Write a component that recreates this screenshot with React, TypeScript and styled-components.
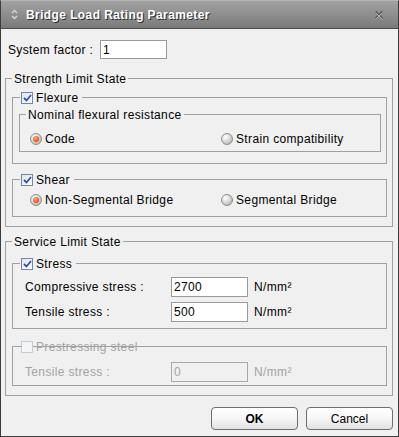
import React from "react";
import styled, { createGlobalStyle } from "styled-components";

const Global = createGlobalStyle`
  html, body {
    margin: 0;
    padding: 0;
    background: #f0f0f0;
  }
  body {
    font-family: "Liberation Sans", Arial, sans-serif;
    font-size: 12px;
    letter-spacing: 0.35px;
    color: #000;
  }
`;

const Window = styled.div`
  width: 399px;
  height: 437px;
  box-sizing: border-box;
  border: 1px solid #3c3c3c;
  border-top: none;
  background: #f0f0f0;
  display: flex;
  flex-direction: column;
`;

const TitleBar = styled.div`
  height: 29px;
  box-sizing: border-box;
  margin: 0 -1px;
  border-top: 1px solid #b4b4b4;
  border-bottom: 1px solid #4c4c4c;
  border-left: 1px solid #3c3c3c;
  border-right: 1px solid #3c3c3c;
  background: linear-gradient(#a2a2a2, #8e8e8e 50%, #7a7a7a);
  display: flex;
  align-items: center;
  padding: 0 14px 0 10px;
`;

const TitleText = styled.span`
  flex: 1;
  margin-left: 8px;
  font-weight: 700;
  font-size: 12px;
  letter-spacing: 0.4px;
  color: #fff;
  text-shadow: 1px 1px 0 #2e2e2e;
`;

const Body = styled.div`
  flex: 1;
  display: flex;
  flex-direction: column;
  padding: 11px 5px 0 4px;
`;

const FieldRow = styled.div`
  height: 19px;
  display: flex;
  align-items: center;
  padding-left: 3px;
  margin-bottom: 19px;
`;

const Label = styled.span<{ $w?: number; $off?: boolean }>`
  width: ${(p) => (p.$w ? `${p.$w}px` : "auto")};
  flex: none;
  color: ${(p) => (p.$off ? "#a3a3a3" : "#000")};
  white-space: nowrap;
`;

const Input = styled.div<{ $w: number; $h: number; $off?: boolean }>`
  width: ${(p) => p.$w}px;
  height: ${(p) => p.$h}px;
  box-sizing: border-box;
  border: 1px solid ${(p) => (p.$off ? "#a8a8a8" : "#9a9a9a")};
  background: ${(p) => (p.$off ? "#f0f0f0" : "#fff")};
  color: ${(p) => (p.$off ? "#a3a3a3" : "#000")};
  display: flex;
  align-items: center;
  padding-left: 2px;
  flex: none;
`;

const Unit = styled.span<{ $off?: boolean }>`
  margin-left: 6px;
  color: ${(p) => (p.$off ? "#a3a3a3" : "#000")};
`;

const Group = styled.div<{ $pad: string; $mt?: number }>`
  position: relative;
  border: 1px solid #a0a0a0;
  padding: ${(p) => p.$pad};
  margin-top: ${(p) => p.$mt ?? 0}px;
  display: flex;
  flex-direction: column;
`;

const GroupTitle = styled.div<{ $check?: boolean; $clear?: boolean; $off?: boolean }>`
  position: absolute;
  top: -8px;
  left: ${(p) => (p.$check ? 7 : 6)}px;
  height: 15px;
  padding: ${(p) => (p.$check ? "0 4px 0 1px" : "0 2px")};
  display: flex;
  align-items: center;
  gap: 3px;
  background: ${(p) => (p.$clear ? "transparent" : "#f0f0f0")};
  color: ${(p) => (p.$off ? "#a3a3a3" : "#000")};
  white-space: nowrap;
`;

const Box = styled.span<{ $off?: boolean }>`
  width: 12px;
  height: 12px;
  box-sizing: border-box;
  border: 1px solid ${(p) => (p.$off ? "#c4cbd8" : "#7487a8")};
  background: ${(p) =>
    p.$off ? "#f4f5f8" : "linear-gradient(135deg, #dfe3ea, #ffffff)"};
  display: flex;
  align-items: center;
  justify-content: center;
  flex: none;
`;

const RadioRow = styled.div`
  height: 12px;
  display: flex;
  align-items: center;
`;

const RadioItem = styled.div<{ $w?: number }>`
  width: ${(p) => (p.$w ? `${p.$w}px` : "auto")};
  display: flex;
  align-items: center;
  gap: 3px;
  flex: none;
`;

const Dot = styled.span<{ $on?: boolean }>`
  width: 12px;
  height: 12px;
  box-sizing: border-box;
  border-radius: 50%;
  border: 1px solid #8e8e8e;
  background: radial-gradient(circle at 35% 30%, #ffffff 0%, #dedede 40%, #a4a4a4 100%);
  display: flex;
  align-items: center;
  justify-content: center;
  flex: none;

  &::after {
    content: "";
    display: ${(p) => (p.$on ? "block" : "none")};
    width: 6px;
    height: 6px;
    border-radius: 50%;
    background: radial-gradient(circle at 40% 35%, #ffb488 0%, #f55a22 55%, #c9300a 100%);
  }
`;

const StressRow = styled.div<{ $mt?: number }>`
  height: 20px;
  display: flex;
  align-items: center;
  margin-top: ${(p) => p.$mt ?? 0}px;
`;

const ButtonBar = styled.div`
  display: flex;
  justify-content: flex-end;
  gap: 8px;
  margin-top: 11px;
`;

const Button = styled.button<{ $bold?: boolean }>`
  width: 87px;
  height: 23px;
  box-sizing: border-box;
  border: 1px solid #6e6e6e;
  border-radius: 4px;
  background: linear-gradient(#ffffff, #f6f6f6 50%, #e2e2e2);
  font-family: "Liberation Sans", Arial, sans-serif;
  font-size: 12px;
  font-weight: ${(p) => (p.$bold ? 700 : 400)};
  color: #000;
  padding: 0;
`;

const Check = () => (
  <svg width="9" height="8" viewBox="0 0 9 8">
    <path d="M1 4 L3.5 6.5 L8 1" fill="none" stroke="#2b4ec4" strokeWidth="1.8" />
  </svg>
);

const SortIcon = () => (
  <svg width="7" height="11" viewBox="0 0 7 11">
    <path d="M1 4 L3.5 1.5 L6 4" fill="none" stroke="#d8d8d8" strokeWidth="1.3" />
    <path d="M1 7 L3.5 9.5 L6 7" fill="none" stroke="#d8d8d8" strokeWidth="1.3" />
  </svg>
);

const CloseIcon = () => (
  <svg width="10" height="10" viewBox="0 0 10 10">
    <path d="M1.5 1.5 L8.5 8.5 M8.5 1.5 L1.5 8.5" stroke="#5c5c5c" strokeWidth="2" />
    <path d="M1.5 2.5 L8.5 9.5 M8.5 2.5 L1.5 9.5" stroke="#b4b4b4" strokeWidth="1" />
  </svg>
);

export default function App() {
  return (
    <>
      <Global />
      <Window>
        <TitleBar>
          <SortIcon />
          <TitleText>Bridge Load Rating Parameter</TitleText>
          <CloseIcon />
        </TitleBar>
        <Body>
          <FieldRow>
            <Label $w={92}>System factor :</Label>
            <Input $w={67} $h={19}>1</Input>
          </FieldRow>

          <Group $pad="18px 5px 9px 6px">
            <GroupTitle>Strength Limit State</GroupTitle>
            <Group $pad="16px 5px 11px 6px">
              <GroupTitle $check>
                <Box><Check /></Box>
                Flexure
              </GroupTitle>
              <Group $pad="18px 5px 6px 10px">
                <GroupTitle>Nominal flexural resistance</GroupTitle>
                <RadioRow>
                  <RadioItem $w={191}>
                    <Dot $on />
                    Code
                  </RadioItem>
                  <RadioItem>
                    <Dot />
                    Strain compatibility
                  </RadioItem>
                </RadioRow>
              </Group>
            </Group>
            <Group $pad="14px 5px 10px 17px" $mt={15}>
              <GroupTitle $check>
                <Box><Check /></Box>
                Shear
              </GroupTitle>
              <RadioRow>
                <RadioItem $w={191}>
                  <Dot $on />
                  Non-Segmental Bridge
                </RadioItem>
                <RadioItem>
                  <Dot />
                  Segmental Bridge
                </RadioItem>
              </RadioRow>
            </Group>
          </Group>

          <Group $pad="21px 5px 9px 6px" $mt={14}>
            <GroupTitle>Service Limit State</GroupTitle>
            <Group $pad="13px 5px 6px 12px">
              <GroupTitle $check>
                <Box><Check /></Box>
                Stress
              </GroupTitle>
              <StressRow>
                <Label $w={146}>Compressive stress :</Label>
                <Input $w={77} $h={20}>2700</Input>
                <Unit>N/mm²</Unit>
              </StressRow>
              <StressRow $mt={5}>
                <Label $w={146}>Tensile stress :</Label>
                <Input $w={77} $h={20}>500</Input>
                <Unit>N/mm²</Unit>
              </StressRow>
            </Group>
            <Group $pad="15px 5px 3px 12px" $mt={17}>
              <GroupTitle $check $clear $off>
                <Box $off />
                Prestressing steel
              </GroupTitle>
              <StressRow>
                <Label $w={146} $off>Tensile stress :</Label>
                <Input $w={77} $h={20} $off>0</Input>
                <Unit $off>N/mm²</Unit>
              </StressRow>
            </Group>
          </Group>

          <ButtonBar>
            <Button $bold>OK</Button>
            <Button>Cancel</Button>
          </ButtonBar>
        </Body>
      </Window>
    </>
  );
}
